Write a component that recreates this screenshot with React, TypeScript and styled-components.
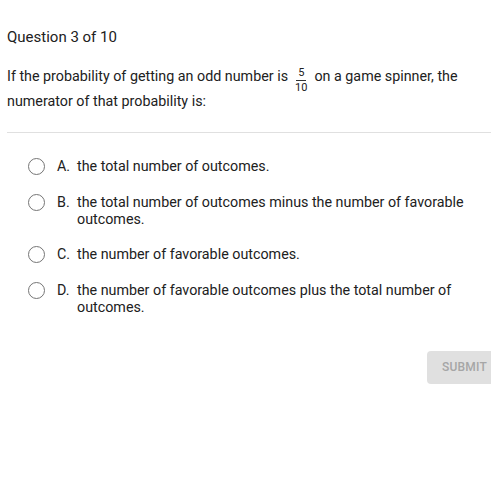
import styled, { createGlobalStyle } from "styled-components";

const Global = createGlobalStyle`
  html, body {
    margin: 0;
    padding: 0;
    background: #fff;
    overflow: hidden;
  }
  body {
    font-family: Roboto, "Liberation Sans", sans-serif;
    color: #212121;
  }
`;

const Page = styled.div`
  padding: 27px 0 0 7px;
  width: 484px;
`;

const Title = styled.div`
  font-size: 15px;
  line-height: 20px;
`;

const Prompt = styled.div`
  margin-top: 17px;
  font-size: 14.3px;
  line-height: 25px;
  padding-bottom: 18px;
  border-bottom: 1px solid #e0e0e0;
`;

// the fraction hangs over the line box without making the line taller
const Frac = styled.span`
  display: inline-flex;
  flex-direction: column;
  align-items: center;
  vertical-align: baseline;
  font-size: 11px;
  line-height: 10px;
  margin: -12px 5px -12px 5px;
  position: relative;
  top: -5px;
`;

const Num = styled.span`
  padding: 0 2px 2px;
  border-bottom: 1px solid #333;
`;

const Den = styled.span`
  padding: 2px 2px 0;
`;

const Options = styled.div`
  display: flex;
  flex-direction: column;
  gap: 18.5px;
  padding: 25px 0 0 21px;
`;

const Option = styled.label`
  display: flex;
  align-items: flex-start;
  font-size: 14.3px;
  line-height: 17px;
  cursor: pointer;
`;

const Radio = styled.span`
  flex: none;
  width: 15px;
  height: 15px;
  border: 1.5px solid #757575;
  border-radius: 50%;
  margin: 0 12px 0 0;
`;

const Letter = styled.span`
  flex: none;
  width: 20px;
`;

const Text = styled.span`
  flex: 1;
  padding-right: 24px;
`;

const Footer = styled.div`
  display: flex;
  justify-content: flex-end;
  margin-top: 35px;
  margin-right: -17px;
`;

const Submit = styled.button`
  width: 81px;
  height: 33px;
  border: none;
  border-radius: 4px;
  background: #e0e0e0;
  color: #a6a6a6;
  font-family: Roboto, "Liberation Sans", sans-serif;
  font-size: 12px;
  font-weight: 500;
  letter-spacing: 0.2px;
  text-align: left;
  padding-left: 15px;
`;

const answers = [
  { key: "A.", text: "the total number of outcomes." },
  { key: "B.", text: "the total number of outcomes minus the number of favorable outcomes." },
  { key: "C.", text: "the number of favorable outcomes." },
  { key: "D.", text: "the number of favorable outcomes plus the total number of outcomes." },
];

export default function App() {
  return (
    <Page>
      <Global />
      <Title>Question 3 of 10</Title>
      <Prompt>
        If the probability of getting an odd number is
        <Frac>
          <Num>5</Num>
          <Den>10</Den>
        </Frac>
        on a game spinner, the numerator of that probability is:
      </Prompt>
      <Options>
        {answers.map((a) => (
          <Option key={a.key}>
            <Radio />
            <Letter>{a.key}</Letter>
            <Text>{a.text}</Text>
          </Option>
        ))}
      </Options>
      <Footer>
        <Submit disabled>SUBMIT</Submit>
      </Footer>
    </Page>
  );
}
